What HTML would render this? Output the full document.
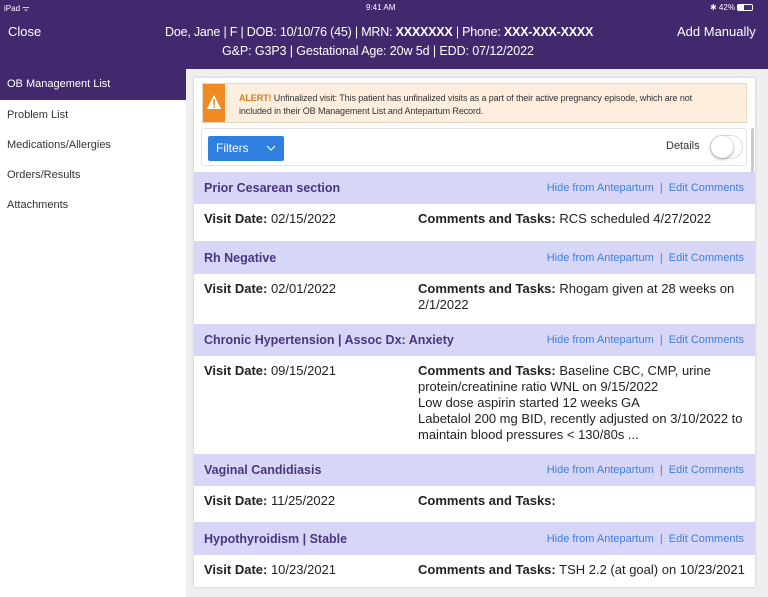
<!DOCTYPE html>
<html><head><style>
*{box-sizing:border-box;margin:0;padding:0}
body{width:768px;height:597px;overflow:hidden;background:#efeff1;font-family:"Liberation Sans",sans-serif;position:relative;color:#222}
.hdr{position:absolute;left:0;top:0;width:768px;height:69px;background:#42286c;color:#fff}
.a{position:absolute;white-space:nowrap}
.side{position:absolute;left:0;top:69px;width:186px;height:528px;background:#fff}
.side div{height:30px;line-height:30px;padding-left:7px;font-size:11px;color:#333}
.side .act{background:#42286c;color:#fff;height:31px}
.panel{position:absolute;left:194px;top:78px;width:561px;height:509px;background:#fff;box-shadow:0 0 2px #bbb}
.sh{position:absolute;left:194px;width:561px;background:#d8d6f7}
.sh .t{position:absolute;left:10px;font-size:12.5px;color:#4a3580;font-weight:bold;top:50%;transform:translateY(-50%)}
.sh .l{position:absolute;right:11px;font-size:11px;color:#3a7fe0;top:50%;transform:translateY(-50%)}
.row{position:absolute;left:194px;width:561px;font-size:13px;color:#222;line-height:16px}
.row .v{position:absolute;left:10px;top:7px}
.row .c{position:absolute;left:224px;top:7px;width:330px}
</style></head><body>
<div class="hdr">
<div class="a" style="left:4px;top:3px;font-size:8px">iPad ᯤ</div>
<div class="a" style="left:366px;top:3px;font-size:8px">9:41 AM</div>
<div class="a" style="left:710px;top:3px;font-size:8px">✱ 42% <span style="display:inline-block;width:16px;height:7px;border:1px solid #fff;border-radius:2px;vertical-align:middle;background:linear-gradient(90deg,#fff 42%,transparent 42%)"></span></div>
<div class="a" style="left:8px;top:24px;font-size:13px">Close</div>
<div class="a" style="left:165px;top:25px;font-size:12.5px;letter-spacing:-0.2px">Doe, Jane | F | DOB: 10/10/76 (45) | MRN: <b>XXXXXXX</b> | Phone: <b>XXX-XXX-XXXX</b></div>
<div class="a" style="left:222px;top:44px;font-size:12.5px;letter-spacing:-0.1px">G&amp;P: G3P3 | Gestational Age: 20w 5d | EDD: 07/12/2022</div>
<div class="a" style="left:677px;top:24px;font-size:13px">Add Manually</div>
</div>
<div class="side"><div class="act">OB Management List</div><div>Problem List</div><div>Medications/Allergies</div><div>Orders/Results</div><div>Attachments</div></div>
<div class="panel"></div>
<div class="a" style="left:202px;top:83px;width:545px;height:40px;background:#fdeedd;border:1px solid #e8d4bf">
<div style="position:absolute;left:0;top:0;width:22px;height:38px;background:#f08a24"><svg width="22" height="38"><path d="M11 11L18 25H4Z" fill="#fff"/><rect x="10.2" y="15" width="1.6" height="6" fill="#f08a24"/><rect x="10.2" y="22" width="1.6" height="1.6" fill="#f08a24"/></svg></div>
<div style="position:absolute;left:36px;top:8px;font-size:9px;line-height:13px;color:#333;letter-spacing:-0.1px">
<b style="color:#d5791f">ALERT!</b> Unfinalized visit: This patient has unfinalized visits as a part of their active pregnancy episode, which are not<br>included in their OB Management List and Antepartum Record.</div></div>
<div class="a" style="left:201px;top:128px;width:546px;height:38px;border:1px solid #e3e3e3;border-radius:3px;background:#fff">
<div style="position:absolute;left:6px;top:7px;width:76px;height:25px;background:#2f7fe0;border-radius:2px;color:#fff;font-size:12px;line-height:25px;padding-left:8px">Filters <svg style="position:absolute;left:58px;top:9px" width="10" height="7"><path d="M1 1L5 5L9 1" stroke="#fff" fill="none" stroke-width="1.2"/></svg></div>
<div style="position:absolute;left:464px;top:11px;font-size:11px;color:#333">Details</div>
<div style="position:absolute;left:508px;top:6px;width:33px;height:24px;border:1px solid #ddd;border-radius:12px;background:#fff"><div style="width:22px;height:22px;border-radius:11px;background:#fff;box-shadow:0 1px 3px #999"></div></div>
</div>
<div class="a" style="left:751px;top:128px;width:3px;height:45px;background:#ccc;border-radius:2px"></div>

<div class="sh" style="top:172px;height:32px"><span class="t">Prior Cesarean section</span><span class="l">Hide from Antepartum &nbsp;|&nbsp; Edit Comments</span></div>
<div class="row" style="top:204px;height:37px"><div class="v"><b>Visit Date:</b> 02/15/2022</div><div class="c"><b>Comments and Tasks:</b> RCS scheduled 4/27/2022</div></div>
<div class="sh" style="top:241px;height:33px"><span class="t">Rh Negative</span><span class="l">Hide from Antepartum &nbsp;|&nbsp; Edit Comments</span></div>
<div class="row" style="top:274px;height:50px"><div class="v"><b>Visit Date:</b> 02/01/2022</div><div class="c"><b>Comments and Tasks:</b> Rhogam given at 28 weeks on 2/1/2022</div></div>
<div class="sh" style="top:324px;height:32px"><span class="t">Chronic Hypertension | Assoc Dx: Anxiety</span><span class="l">Hide from Antepartum &nbsp;|&nbsp; Edit Comments</span></div>
<div class="row" style="top:356px;height:98px"><div class="v"><b>Visit Date:</b> 09/15/2021</div><div class="c"><b>Comments and Tasks:</b> Baseline CBC, CMP, urine protein/creatinine ratio WNL on 9/15/2022<br>Low dose aspirin started 12 weeks GA<br>Labetalol 200 mg BID, recently adjusted on 3/10/2022 to maintain blood pressures &lt; 130/80s ...</div></div>
<div class="sh" style="top:454px;height:32px"><span class="t">Vaginal Candidiasis</span><span class="l">Hide from Antepartum &nbsp;|&nbsp; Edit Comments</span></div>
<div class="row" style="top:486px;height:36px"><div class="v"><b>Visit Date:</b> 11/25/2022</div><div class="c"><b>Comments and Tasks:</b></div></div>
<div class="sh" style="top:522px;height:33px"><span class="t">Hypothyroidism | Stable</span><span class="l">Hide from Antepartum &nbsp;|&nbsp; Edit Comments</span></div>
<div class="row" style="top:555px;height:32px"><div class="v"><b>Visit Date:</b> 10/23/2021</div><div class="c"><b>Comments and Tasks:</b> TSH 2.2 (at goal) on 10/23/2021</div></div>
</body></html>
